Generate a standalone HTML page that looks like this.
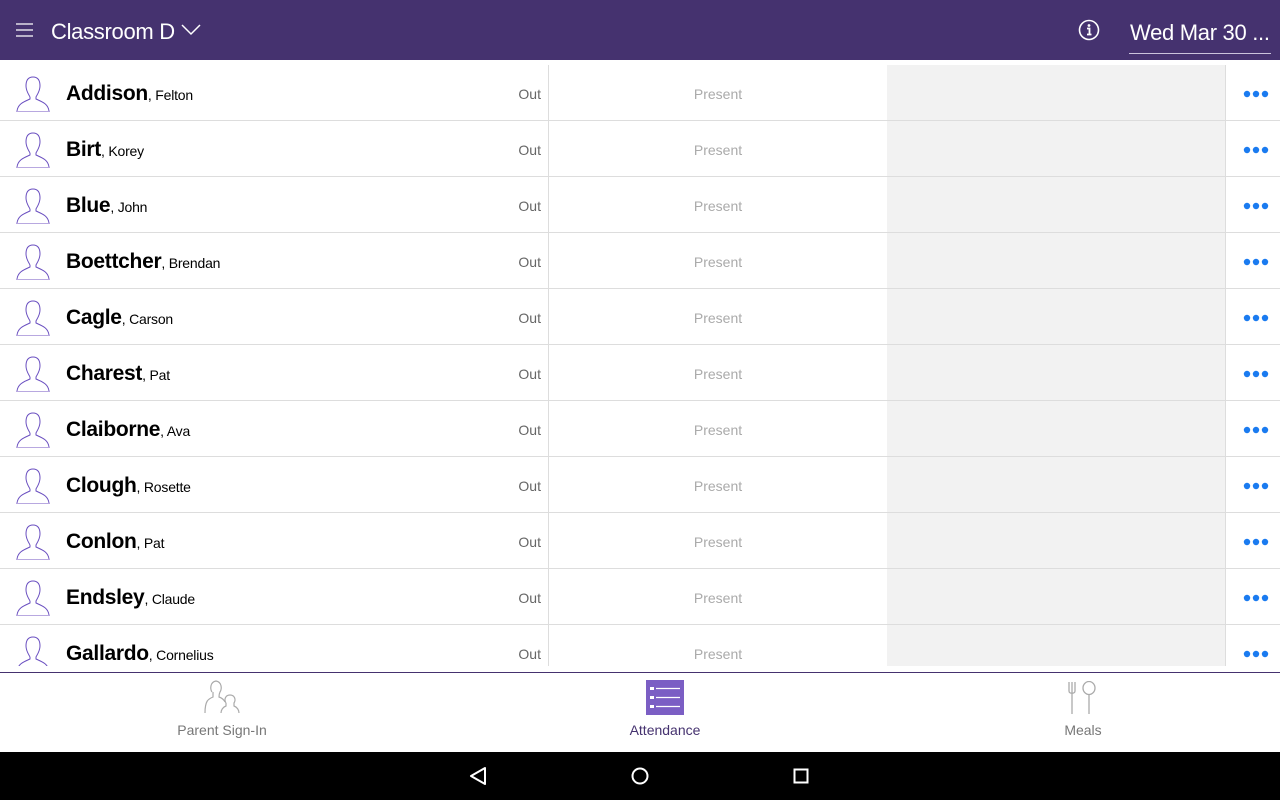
<!DOCTYPE html>
<html><head><meta charset="utf-8"><style>
*{margin:0;padding:0;box-sizing:border-box}
body{width:1280px;height:800px;position:relative;overflow:hidden;background:#fff;font-family:"Liberation Sans",Roboto,sans-serif}
.top{position:absolute;left:0;top:0;width:1280px;height:60px;background:#45326f;color:#fff}
.list{position:absolute;left:0;top:60px;width:1280px;height:606px;overflow:hidden}
.row{position:absolute;left:0;width:1280px;height:56px;border-bottom:1px solid #ddd}
.grey{position:absolute;left:887px;top:0;width:338px;height:55px;background:#f2f2f2}
.v1{position:absolute;left:548px;top:0;width:1px;height:55px;background:#ddd}
.v2{position:absolute;left:1225px;top:0;width:1px;height:55px;background:#ddd}
.av{position:absolute;left:16px;top:11px}
.nm{position:absolute;left:66px;top:17px;font-size:21px;font-weight:bold;color:#000;letter-spacing:-0.3px;white-space:nowrap}
.nm span{font-size:14px;font-weight:normal;letter-spacing:-0.2px}
.out{position:absolute;left:500px;width:41px;text-align:right;top:21px;font-size:14px;color:#666}
.pr{position:absolute;left:549px;width:338px;text-align:center;top:21px;font-size:14px;color:#aaa}
.dots{position:absolute;left:1243px;top:25px}
.nav{position:absolute;left:0;top:672px;width:1280px;height:80px;border-top:1px solid #45326f;background:#fff}
.nav div{position:absolute;font-size:14px;text-align:center;top:49px}
.sys{position:absolute;left:0;top:752px;width:1280px;height:48px;background:#000}
</style></head><body>
<div class="top">
<svg style="position:absolute;left:16px;top:23px" width="17" height="14"><path d="M0 1H17M0 7H17M0 13H17" stroke="#fff" stroke-width="1.3"/></svg>
<div style="position:absolute;left:51px;top:19px;font-size:22px;white-space:nowrap;letter-spacing:-0.3px">Classroom D</div>
<svg style="position:absolute;left:181px;top:24px" width="20" height="12"><path d="M1 1L10 10L19 1" stroke="#fff" stroke-width="1.5" fill="none"/></svg>
<svg style="position:absolute;left:1078px;top:19px" width="22" height="22"><circle cx="11" cy="11" r="9.5" stroke="#fff" stroke-width="1.6" fill="none"/><circle cx="11" cy="6.5" r="1.4" fill="#fff"/><path d="M9 9.5H11.5V15M9 15.5H13.5" stroke="#fff" stroke-width="1.8" fill="none"/></svg>
<div style="position:absolute;left:1130px;top:20px;font-size:22px;white-space:nowrap;letter-spacing:-0.3px">Wed Mar 30 ...</div>
<div style="position:absolute;left:1129px;top:53px;width:142px;height:1px;background:#cbc3dc"></div>
</div>
<div class="list">
<div class="row" style="top:5px"><div class="grey"></div><div class="v1"></div><div class="v2"></div><svg class="av" width="34" height="36"><path d="M10 10C10 3 13 1 17 1C21 1 24 3 24 10C24 15 21 19 20 21L20 23C24 25 32 27 33 35M14 21L14 23C10 25 2 27 1 35M10 10C10 15 13 19 14 21" stroke="#6a4fc0" stroke-width="1" fill="none"/><path d="M0 35.5H34" stroke="#b8a8e0"/></svg><div class="nm">Addison<span>, Felton</span></div><div class="out">Out</div><div class="pr">Present</div><svg class="dots" width="26" height="8"><circle cx="4" cy="4" r="3.2" fill="#1a7bf0"/><circle cx="13" cy="4" r="3.2" fill="#1a7bf0"/><circle cx="22" cy="4" r="3.2" fill="#1a7bf0"/></svg></div>
<div class="row" style="top:61px"><div class="grey"></div><div class="v1"></div><div class="v2"></div><svg class="av" width="34" height="36"><path d="M10 10C10 3 13 1 17 1C21 1 24 3 24 10C24 15 21 19 20 21L20 23C24 25 32 27 33 35M14 21L14 23C10 25 2 27 1 35M10 10C10 15 13 19 14 21" stroke="#6a4fc0" stroke-width="1" fill="none"/><path d="M0 35.5H34" stroke="#b8a8e0"/></svg><div class="nm">Birt<span>, Korey</span></div><div class="out">Out</div><div class="pr">Present</div><svg class="dots" width="26" height="8"><circle cx="4" cy="4" r="3.2" fill="#1a7bf0"/><circle cx="13" cy="4" r="3.2" fill="#1a7bf0"/><circle cx="22" cy="4" r="3.2" fill="#1a7bf0"/></svg></div>
<div class="row" style="top:117px"><div class="grey"></div><div class="v1"></div><div class="v2"></div><svg class="av" width="34" height="36"><path d="M10 10C10 3 13 1 17 1C21 1 24 3 24 10C24 15 21 19 20 21L20 23C24 25 32 27 33 35M14 21L14 23C10 25 2 27 1 35M10 10C10 15 13 19 14 21" stroke="#6a4fc0" stroke-width="1" fill="none"/><path d="M0 35.5H34" stroke="#b8a8e0"/></svg><div class="nm">Blue<span>, John</span></div><div class="out">Out</div><div class="pr">Present</div><svg class="dots" width="26" height="8"><circle cx="4" cy="4" r="3.2" fill="#1a7bf0"/><circle cx="13" cy="4" r="3.2" fill="#1a7bf0"/><circle cx="22" cy="4" r="3.2" fill="#1a7bf0"/></svg></div>
<div class="row" style="top:173px"><div class="grey"></div><div class="v1"></div><div class="v2"></div><svg class="av" width="34" height="36"><path d="M10 10C10 3 13 1 17 1C21 1 24 3 24 10C24 15 21 19 20 21L20 23C24 25 32 27 33 35M14 21L14 23C10 25 2 27 1 35M10 10C10 15 13 19 14 21" stroke="#6a4fc0" stroke-width="1" fill="none"/><path d="M0 35.5H34" stroke="#b8a8e0"/></svg><div class="nm">Boettcher<span>, Brendan</span></div><div class="out">Out</div><div class="pr">Present</div><svg class="dots" width="26" height="8"><circle cx="4" cy="4" r="3.2" fill="#1a7bf0"/><circle cx="13" cy="4" r="3.2" fill="#1a7bf0"/><circle cx="22" cy="4" r="3.2" fill="#1a7bf0"/></svg></div>
<div class="row" style="top:229px"><div class="grey"></div><div class="v1"></div><div class="v2"></div><svg class="av" width="34" height="36"><path d="M10 10C10 3 13 1 17 1C21 1 24 3 24 10C24 15 21 19 20 21L20 23C24 25 32 27 33 35M14 21L14 23C10 25 2 27 1 35M10 10C10 15 13 19 14 21" stroke="#6a4fc0" stroke-width="1" fill="none"/><path d="M0 35.5H34" stroke="#b8a8e0"/></svg><div class="nm">Cagle<span>, Carson</span></div><div class="out">Out</div><div class="pr">Present</div><svg class="dots" width="26" height="8"><circle cx="4" cy="4" r="3.2" fill="#1a7bf0"/><circle cx="13" cy="4" r="3.2" fill="#1a7bf0"/><circle cx="22" cy="4" r="3.2" fill="#1a7bf0"/></svg></div>
<div class="row" style="top:285px"><div class="grey"></div><div class="v1"></div><div class="v2"></div><svg class="av" width="34" height="36"><path d="M10 10C10 3 13 1 17 1C21 1 24 3 24 10C24 15 21 19 20 21L20 23C24 25 32 27 33 35M14 21L14 23C10 25 2 27 1 35M10 10C10 15 13 19 14 21" stroke="#6a4fc0" stroke-width="1" fill="none"/><path d="M0 35.5H34" stroke="#b8a8e0"/></svg><div class="nm">Charest<span>, Pat</span></div><div class="out">Out</div><div class="pr">Present</div><svg class="dots" width="26" height="8"><circle cx="4" cy="4" r="3.2" fill="#1a7bf0"/><circle cx="13" cy="4" r="3.2" fill="#1a7bf0"/><circle cx="22" cy="4" r="3.2" fill="#1a7bf0"/></svg></div>
<div class="row" style="top:341px"><div class="grey"></div><div class="v1"></div><div class="v2"></div><svg class="av" width="34" height="36"><path d="M10 10C10 3 13 1 17 1C21 1 24 3 24 10C24 15 21 19 20 21L20 23C24 25 32 27 33 35M14 21L14 23C10 25 2 27 1 35M10 10C10 15 13 19 14 21" stroke="#6a4fc0" stroke-width="1" fill="none"/><path d="M0 35.5H34" stroke="#b8a8e0"/></svg><div class="nm">Claiborne<span>, Ava</span></div><div class="out">Out</div><div class="pr">Present</div><svg class="dots" width="26" height="8"><circle cx="4" cy="4" r="3.2" fill="#1a7bf0"/><circle cx="13" cy="4" r="3.2" fill="#1a7bf0"/><circle cx="22" cy="4" r="3.2" fill="#1a7bf0"/></svg></div>
<div class="row" style="top:397px"><div class="grey"></div><div class="v1"></div><div class="v2"></div><svg class="av" width="34" height="36"><path d="M10 10C10 3 13 1 17 1C21 1 24 3 24 10C24 15 21 19 20 21L20 23C24 25 32 27 33 35M14 21L14 23C10 25 2 27 1 35M10 10C10 15 13 19 14 21" stroke="#6a4fc0" stroke-width="1" fill="none"/><path d="M0 35.5H34" stroke="#b8a8e0"/></svg><div class="nm">Clough<span>, Rosette</span></div><div class="out">Out</div><div class="pr">Present</div><svg class="dots" width="26" height="8"><circle cx="4" cy="4" r="3.2" fill="#1a7bf0"/><circle cx="13" cy="4" r="3.2" fill="#1a7bf0"/><circle cx="22" cy="4" r="3.2" fill="#1a7bf0"/></svg></div>
<div class="row" style="top:453px"><div class="grey"></div><div class="v1"></div><div class="v2"></div><svg class="av" width="34" height="36"><path d="M10 10C10 3 13 1 17 1C21 1 24 3 24 10C24 15 21 19 20 21L20 23C24 25 32 27 33 35M14 21L14 23C10 25 2 27 1 35M10 10C10 15 13 19 14 21" stroke="#6a4fc0" stroke-width="1" fill="none"/><path d="M0 35.5H34" stroke="#b8a8e0"/></svg><div class="nm">Conlon<span>, Pat</span></div><div class="out">Out</div><div class="pr">Present</div><svg class="dots" width="26" height="8"><circle cx="4" cy="4" r="3.2" fill="#1a7bf0"/><circle cx="13" cy="4" r="3.2" fill="#1a7bf0"/><circle cx="22" cy="4" r="3.2" fill="#1a7bf0"/></svg></div>
<div class="row" style="top:509px"><div class="grey"></div><div class="v1"></div><div class="v2"></div><svg class="av" width="34" height="36"><path d="M10 10C10 3 13 1 17 1C21 1 24 3 24 10C24 15 21 19 20 21L20 23C24 25 32 27 33 35M14 21L14 23C10 25 2 27 1 35M10 10C10 15 13 19 14 21" stroke="#6a4fc0" stroke-width="1" fill="none"/><path d="M0 35.5H34" stroke="#b8a8e0"/></svg><div class="nm">Endsley<span>, Claude</span></div><div class="out">Out</div><div class="pr">Present</div><svg class="dots" width="26" height="8"><circle cx="4" cy="4" r="3.2" fill="#1a7bf0"/><circle cx="13" cy="4" r="3.2" fill="#1a7bf0"/><circle cx="22" cy="4" r="3.2" fill="#1a7bf0"/></svg></div>
<div class="row" style="top:565px"><div class="grey"></div><div class="v1"></div><div class="v2"></div><svg class="av" width="34" height="36"><path d="M10 10C10 3 13 1 17 1C21 1 24 3 24 10C24 15 21 19 20 21L20 23C24 25 32 27 33 35M14 21L14 23C10 25 2 27 1 35M10 10C10 15 13 19 14 21" stroke="#6a4fc0" stroke-width="1" fill="none"/><path d="M0 35.5H34" stroke="#b8a8e0"/></svg><div class="nm">Gallardo<span>, Cornelius</span></div><div class="out">Out</div><div class="pr">Present</div><svg class="dots" width="26" height="8"><circle cx="4" cy="4" r="3.2" fill="#1a7bf0"/><circle cx="13" cy="4" r="3.2" fill="#1a7bf0"/><circle cx="22" cy="4" r="3.2" fill="#1a7bf0"/></svg></div>
</div>
<div class="nav">
<svg style="position:absolute;left:203px;top:7px" width="38" height="34"><path d="M9 12C7 9 7 2 13 1C19 2 19 9 17 12C16 14 16 16 16 17C19 18 21 20 22 22M10 12C10 14 10 16 10 17C5 19 2 21 2 33" stroke="#aaa" fill="none" stroke-width="1.2"/><path d="M23 23C21 20 22 15 27 15C32 15 33 20 31 23L31 26C34 27 36 30 36 33M23 23L23 26C20 27 18 30 18 33" stroke="#aaa" fill="none" stroke-width="1.2"/></svg>
<div style="left:162px;width:120px;color:#777">Parent Sign-In</div>
<svg style="position:absolute;left:646px;top:7px" width="38" height="35"><rect width="38" height="35" fill="#7b5ec4"/><rect x="4" y="7" width="4" height="3" fill="#fff"/><rect x="4" y="16" width="4" height="3" fill="#fff"/><rect x="4" y="25" width="4" height="3" fill="#fff"/><path d="M10 8.5H34M10 17.5H34M10 26.5H34" stroke="#fff" stroke-width="1.3"/></svg>
<div style="left:605px;width:120px;color:#45326f">Attendance</div>
<svg style="position:absolute;left:1066px;top:8px" width="32" height="34"><path d="M3 1V10C3 13 9 13 9 10V1M6 1V33" stroke="#aaa" fill="none" stroke-width="1.3"/><ellipse cx="23" cy="7" rx="6" ry="6.5" stroke="#aaa" fill="none" stroke-width="1.3"/><path d="M23 13.5V33" stroke="#aaa" stroke-width="1.3"/></svg>
<div style="left:1023px;width:120px;color:#777">Meals</div>
</div>
<div class="sys">
<svg style="position:absolute;left:469px;top:15px" width="18" height="18"><path d="M16 1L2 9L16 17Z" stroke="#fff" stroke-width="2" fill="none" stroke-linejoin="round"/></svg>
<svg style="position:absolute;left:631px;top:15px" width="18" height="18"><circle cx="9" cy="9" r="7.5" stroke="#fff" stroke-width="2" fill="none"/></svg>
<svg style="position:absolute;left:793px;top:16px" width="16" height="16"><rect x="1.5" y="1.5" width="13" height="13" stroke="#fff" stroke-width="2" fill="none"/></svg>
</div>
</body></html>
